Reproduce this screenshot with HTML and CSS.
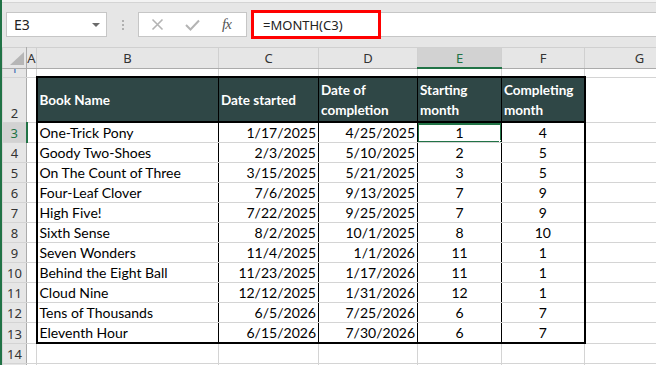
FILE: index.html
```html
<!DOCTYPE html>
<html lang="en">
<head>
    <meta charset="UTF-8">
    <meta name="viewport" content="width=device-width, initial-scale=1.0">
    <title>Book months</title>
    <link rel="stylesheet" href="styles.css">
</head>
<body>
    <div class="app">
        <div class="formula-bar">
            <div class="name-box">
                <span>E3</span>
                <span class="caret"></span>
            </div>
            <div class="grip"><i></i><i></i><i></i></div>
            <div class="fx-buttons">
                <svg class="ico" width="13" height="13" viewBox="0 0 13 13">
                    <path d="M1.5 1.5 L11.5 11.5 M11.5 1.5 L1.5 11.5" stroke="#b4b4b4" stroke-width="1.6" fill="none"/>
                </svg>
                <svg class="ico" width="15" height="12" viewBox="0 0 15 12">
                    <path d="M1 6 L5.5 10.5 L14 1.5" stroke="#b4b4b4" stroke-width="2" fill="none"/>
                </svg>
                <span class="fx">fx</span>
            </div>
            <div class="formula-input">
                <span class="formula-mark">=MONTH(C3)</span>
            </div>
        </div>

        <table class="sheet">
            <colgroup>
                <col class="w-rh">
                <col class="w-a">
                <col class="w-b">
                <col class="w-c">
                <col class="w-d">
                <col class="w-e">
                <col class="w-f">
                <col class="w-g">
            </colgroup>
            <tr class="ch">
                <th class="corner">
                    <svg width="14" height="13" viewBox="0 0 14 13"><path d="M14 0 L14 13 L0 13 Z" fill="#b6b6b6"/></svg>
                </th>
                <th>A</th>
                <th>B</th>
                <th>C</th>
                <th>D</th>
                <th class="active">E</th>
                <th>F</th>
                <th>G</th>
            </tr>
            <tr class="r1">
                <th class="rh"><div class="clip"><span>1</span></div></th>
                <td></td><td></td><td></td><td></td><td></td><td></td><td></td>
            </tr>
            <tr class="r2">
                <th class="rh">2</th>
                <td></td>
                <td class="hd first">Book Name</td>
                <td class="hd">Date started</td>
                <td class="hd">Date of completion</td>
                <td class="hd">Starting month</td>
                <td class="hd last">Completing month</td>
                <td></td>
            </tr>
            <tr>
                <th class="rh active">3</th>
                <td></td>
                <td class="t first">One-Trick Pony</td>
                <td class="t date">1/17/2025</td>
                <td class="t date">4/25/2025</td>
                <td class="t num sel">1</td>
                <td class="t num last">4</td>
                <td></td>
            </tr>
            <tr>
                <th class="rh">4</th>
                <td></td>
                <td class="t first">Goody Two-Shoes</td>
                <td class="t date">2/3/2025</td>
                <td class="t date">5/10/2025</td>
                <td class="t num">2</td>
                <td class="t num last">5</td>
                <td></td>
            </tr>
            <tr>
                <th class="rh">5</th>
                <td></td>
                <td class="t first">On The Count of Three</td>
                <td class="t date">3/15/2025</td>
                <td class="t date">5/21/2025</td>
                <td class="t num">3</td>
                <td class="t num last">5</td>
                <td></td>
            </tr>
            <tr>
                <th class="rh">6</th>
                <td></td>
                <td class="t first">Four-Leaf Clover</td>
                <td class="t date">7/6/2025</td>
                <td class="t date">9/13/2025</td>
                <td class="t num">7</td>
                <td class="t num last">9</td>
                <td></td>
            </tr>
            <tr>
                <th class="rh">7</th>
                <td></td>
                <td class="t first">High Five!</td>
                <td class="t date">7/22/2025</td>
                <td class="t date">9/25/2025</td>
                <td class="t num">7</td>
                <td class="t num last">9</td>
                <td></td>
            </tr>
            <tr>
                <th class="rh">8</th>
                <td></td>
                <td class="t first">Sixth Sense</td>
                <td class="t date">8/2/2025</td>
                <td class="t date">10/1/2025</td>
                <td class="t num">8</td>
                <td class="t num last">10</td>
                <td></td>
            </tr>
            <tr>
                <th class="rh">9</th>
                <td></td>
                <td class="t first">Seven Wonders</td>
                <td class="t date">11/4/2025</td>
                <td class="t date">1/1/2026</td>
                <td class="t num">11</td>
                <td class="t num last">1</td>
                <td></td>
            </tr>
            <tr>
                <th class="rh">10</th>
                <td></td>
                <td class="t first">Behind the Eight Ball</td>
                <td class="t date">11/23/2025</td>
                <td class="t date">1/17/2026</td>
                <td class="t num">11</td>
                <td class="t num last">1</td>
                <td></td>
            </tr>
            <tr>
                <th class="rh">11</th>
                <td></td>
                <td class="t first">Cloud Nine</td>
                <td class="t date">12/12/2025</td>
                <td class="t date">1/31/2026</td>
                <td class="t num">12</td>
                <td class="t num last">1</td>
                <td></td>
            </tr>
            <tr>
                <th class="rh">12</th>
                <td></td>
                <td class="t first">Tens of Thousands</td>
                <td class="t date">6/5/2026</td>
                <td class="t date">7/25/2026</td>
                <td class="t num">6</td>
                <td class="t num last">7</td>
                <td></td>
            </tr>
            <tr class="end">
                <th class="rh">13</th>
                <td></td>
                <td class="t first">Eleventh Hour</td>
                <td class="t date">6/15/2026</td>
                <td class="t date">7/30/2026</td>
                <td class="t num">6</td>
                <td class="t num last">7</td>
                <td></td>
            </tr>
            <tr>
                <th class="rh">14</th>
                <td></td><td></td><td></td><td></td><td></td><td></td><td></td>
            </tr>
            <tr>
                <th class="rh">15</th>
                <td></td><td></td><td></td><td></td><td></td><td></td><td></td>
            </tr>
        </table>
    </div>
</body>
</html>
```

FILE: styles.css
```css
body {
    margin: 0;
    overflow: hidden;
    background: #ffffff;
}

.app {
    width: 656px;
    height: 365px;
    overflow: hidden;
    box-sizing: border-box;
    border-left: 2px solid #217346;
    background: #e6e6e6;
}

/* formula bar */

.formula-bar {
    height: 47px;
    box-sizing: border-box;
    padding: 12px 0 0 4px;
    display: flex;
    align-items: flex-start;
    background: linear-gradient(#f3f3f3 0, #f3f3f3 2px, #d4d4d4 2px, #d4d4d4 3px, #e6e6e6 3px);
    font-family: 'Noto Sans', sans-serif;
    font-size: 14px;
    color: #222;
}

.name-box {
    width: 101px;
    height: 25px;
    box-sizing: border-box;
    background: #fff;
    border: 1px solid #c6c6c6;
    display: flex;
    align-items: center;
    justify-content: space-between;
    padding: 0 6px 0 7px;
}

.caret {
    width: 0;
    height: 0;
    border-left: 4px solid transparent;
    border-right: 4px solid transparent;
    border-top: 4px solid #6a6a6a;
}

.grip {
    width: 31px;
    height: 25px;
    display: flex;
    flex-direction: column;
    align-items: center;
    justify-content: center;
    gap: 2px;
}

.grip i {
    width: 2px;
    height: 2px;
    background: #b0b0b0;
}

.fx-buttons {
    width: 109px;
    height: 25px;
    box-sizing: border-box;
    background: #fff;
    border: 1px solid #c6c6c6;
    display: flex;
    align-items: center;
    padding-left: 12px;
}

.fx-buttons .ico + .ico {
    margin-left: 21px;
}

.fx {
    margin-left: 22px;
    font-family: 'Liberation Serif', serif;
    font-style: italic;
    font-size: 15px;
    color: #555;
    letter-spacing: -1px;
}

.formula-input {
    flex: 1;
    height: 25px;
    margin-left: 4px;
    box-sizing: border-box;
    background: #fff;
    border: 1px solid #c6c6c6;
    border-right: none;
    display: flex;
    align-items: center;
}

.formula-mark {
    margin-left: -1px;
    width: 130px;
    height: 29px;
    flex: none;
    box-sizing: border-box;
    border: 3px solid #ff0000;
    padding-left: 9px;
    display: flex;
    align-items: center;
    font-size: 13px;
    color: #222;
}

/* grid */

.sheet {
    border-collapse: collapse;
    table-layout: fixed;
    width: 692px;
    background: #fff;
    font-family: 'Lato', sans-serif;
    font-size: 14px;
    color: #000;
}

.w-rh { width: 24px; }
.w-a { width: 10px; }
.w-b { width: 182px; }
.w-c { width: 100px; }
.w-d { width: 99px; }
.w-e { width: 84px; }
.w-f { width: 83px; }
.w-g { width: 110px; }

.sheet td {
    border: 1px solid #d4d4d4;
    padding: 0 2px;
    height: 19px;
    line-height: 18px;
    vertical-align: bottom;
    white-space: nowrap;
    overflow: hidden;
}

.sheet th {
    font-family: 'Noto Sans', sans-serif;
    font-weight: normal;
    font-size: 13px;
    color: #333;
    background: #e6e6e6;
    padding: 0;
}

.ch th {
    height: 19px;
    border: 1px solid #d0d0d0;
    border-bottom-color: #ababab;
    line-height: 18px;
}

.ch th.corner {
    text-align: right;
    vertical-align: bottom;
    border-right-color: #ababab;
}

.corner svg {
    display: block;
    margin: 0 2px 3px auto;
}

.ch th.active {
    background: #d2d2d2;
    color: #217346;
    border-bottom: 2px solid #217346;
}

.rh {
    border: 1px solid #d4d4d4;
    border-right-color: #ababab;
    vertical-align: bottom;
    line-height: 18px;
}

.rh.active {
    background: #d2d2d2;
    color: #217346;
    border-right: 2px solid #217346;
}

.r1 td,
.r1 th {
    height: 7px;
    line-height: 7px;
}

.clip {
    height: 8px;
    overflow: hidden;
}

.clip span {
    display: block;
    line-height: 18px;
    margin-top: -10px;
    color: #3b6fb5;
}

.r2 td {
    height: 43px;
}

/* table */

.sheet td.hd {
    background: #2f4746;
    color: #fff;
    font-weight: bold;
    font-size: 13.5px;
    white-space: normal;
    vertical-align: middle;
    line-height: 20px;
    border: 1px solid #000;
    border-top-width: 2px;
    border-bottom-width: 2px;
}

.sheet td.t {
    border-left: 1px solid #000;
    border-right: 1px solid #000;
}

.sheet td.first {
    border-left: 2px solid #000;
    padding-left: 2px;
}

.sheet td.last {
    border-right: 2px solid #000;
}

.end td.t {
    border-bottom: 2px solid #000;
}

.date {
    text-align: right;
}

.num {
    text-align: center;
}

.sel {
    position: relative;
}

.sel::before {
    content: '';
    position: absolute;
    left: -1px;
    top: 0;
    right: -1px;
    bottom: -1px;
    border: 2px solid #217346;
}

.sel::after {
    content: '';
    position: absolute;
    right: -4px;
    bottom: -4px;
    width: 5px;
    height: 5px;
    background: #217346;
    border: 1px solid #fff;
    border-width: 1px 0 0 1px;
}
```
